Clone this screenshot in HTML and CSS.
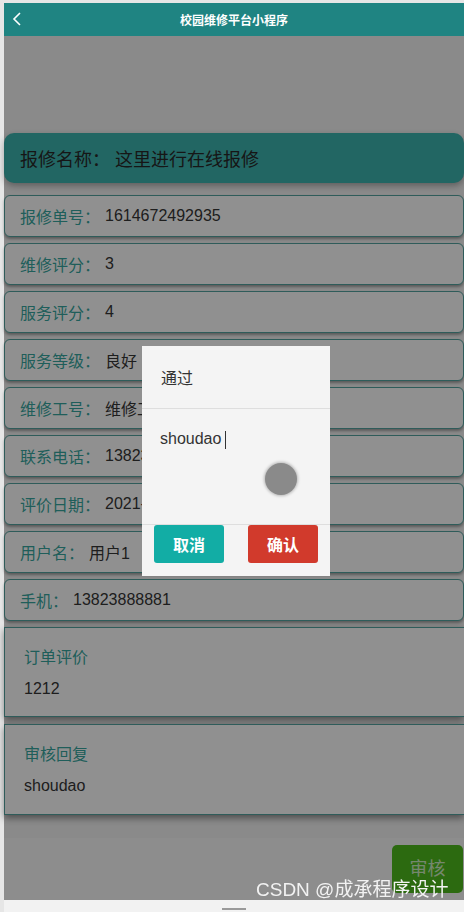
FILE: index.html
```html
<!DOCTYPE html>
<html lang="zh-CN">
<head>
  <meta charset="UTF-8">
  <title>校园维修平台小程序</title>
  <link rel="stylesheet" href="styles.css">
</head>
<body>

  <div class="nav">
    <svg class="back" width="12" height="16" viewBox="0 0 12 16">
      <polyline points="8,2 2,8 8,14" fill="none" stroke="#fff" stroke-width="1.6" />
    </svg>
    <span class="nav-title">校园维修平台小程序</span>
  </div>

  <div class="page">
    <div class="head-card"><span class="head-label">报修名称：</span>这里进行在线报修</div>

    <div class="rows">
      <div class="row"><span class="label">报修单号：</span>1614672492935</div>
      <div class="row"><span class="label">维修评分：</span>3</div>
      <div class="row"><span class="label">服务评分：</span>4</div>
      <div class="row"><span class="label">服务等级：</span>良好</div>
      <div class="row"><span class="label">维修工号：</span>维修工1</div>
      <div class="row"><span class="label">联系电话：</span>13823888881</div>
      <div class="row"><span class="label">评价日期：</span>2021-03-02</div>
      <div class="row"><span class="label">用户名：</span>用户1</div>
      <div class="row"><span class="label">手机：</span>13823888881</div>
    </div>

    <div class="block">
      <div class="block-title">订单评价</div>
      <div class="block-text">1212</div>
    </div>
    <div class="block second">
      <div class="block-title">审核回复</div>
      <div class="block-text">shoudao</div>
    </div>

    <div class="footer">
      <button class="audit">审核</button>
    </div>
  </div>

  <div class="mask">
    <div class="dialog">
      <div class="dialog-title">通过</div>
      <div class="dialog-body">
        <span class="input-text">shoudao</span><span class="caret"></span>
        <div class="touch"></div>
      </div>
      <div class="dialog-btns">
        <button class="btn cancel">取消</button>
        <button class="btn ok">确认</button>
      </div>
    </div>
  </div>

  <div class="watermark">CSDN @成承程序设计</div>
  <div class="home-bar"><span class="handle"></span></div>

</body>
</html>
```

FILE: styles.css
```css
body {
  margin: 0;
  padding: 3px 0 0 4px;
  background-color: #e6e6e6;
  font-family: 'Liberation Sans', 'Noto Sans CJK SC', sans-serif;
  color: #333;
  height: 909px;
  overflow: hidden;
}

.nav {
  height: 33px;
  background-color: #1f8482;
  display: flex;
  align-items: center;
  justify-content: center;
  position: relative;
}

.back {
  position: absolute;
  left: 8px;
  top: 8px;
}

.nav-title {
  color: #fff;
  font-size: 12px;
  font-weight: bold;
}

.page {
  padding-top: 97px;
}

.head-card {
  height: 50px;
  background-color: #3aaaa5;
  border-radius: 10px;
  box-shadow: 0 3px 6px rgba(0,0,0,0.3);
  display: flex;
  align-items: center;
  padding-left: 16px;
  font-size: 18px;
  color: #262626;
}

.head-label {
  margin-right: 5px;
}

.rows {
  margin-top: 12px;
  display: flex;
  flex-direction: column;
  gap: 6px;
}

.row {
  height: 40px;
  border: 1px solid #4f9a96;
  border-radius: 6px;
  background-color: #f1f1f1;
  box-shadow: 0 2px 3px rgba(0,0,0,0.35);
  display: flex;
  align-items: center;
  padding-left: 15px;
  font-size: 16px;
  color: #333;
}

.label {
  color: #349d96;
  margin-right: 5px;
}

.block {
  margin-top: 6px;
  border: 1px solid #4f9a96;
  border-right: none;
  background-color: #f1f1f1;
  box-shadow: 0 3px 7px rgba(0,0,0,0.45);
  padding-left: 19px;
  box-sizing: border-box;
  height: 90px;
  padding-top: 19px;
}

.block.second {
  margin-top: 7px;
  height: 91px;
}

.block-title {
  font-size: 16px;
  color: #349d96;
  line-height: 22px;
}

.block-text {
  margin-top: 9px;
  font-size: 16px;
  color: #333;
  line-height: 22px;
}

.footer {
  margin-top: 23px;
  height: 62px;
  background-color: #ebebeb;
  display: flex;
  justify-content: flex-end;
  padding-top: 7px;
  padding-right: 1px;
}

.audit {
  width: 71px;
  height: 48px;
  border: none;
  border-radius: 5px;
  background-color: #4ab11b;
  color: #c4e2b8;
  font-size: 18px;
  font-family: 'Liberation Sans', 'Noto Sans CJK SC', sans-serif;
  padding: 0 0 4px;
}

.mask {
  position: fixed;
  left: 4px;
  right: 0;
  top: 36px;
  bottom: 12px;
  background-color: rgba(0,0,0,0.4);
}

.dialog {
  position: absolute;
  left: 138px;
  top: 310px;
  width: 188px;
  height: 230px;
  background-color: #f4f4f4;
}

.dialog-title {
  height: 62px;
  border-bottom: 1px solid #dedede;
  display: flex;
  align-items: center;
  padding-left: 19px;
  font-size: 16px;
  color: #333;
}

.dialog-body {
  height: 116px;
  border-bottom: 1px solid #dedede;
  position: relative;
  padding: 20px 0 0 18px;
  box-sizing: border-box;
  display: flex;
  align-items: flex-start;
}

.input-text {
  font-size: 16px;
  color: #333;
  line-height: 20px;
}

.caret {
  width: 1px;
  height: 18px;
  background-color: #333;
  margin: 2px 0 0 4px;
}

.touch {
  position: absolute;
  left: 123px;
  top: 54px;
  width: 32px;
  height: 32px;
  border-radius: 50%;
  background-color: #8a8a8a;
  box-shadow: 0 0 3px 1px rgba(0,0,0,0.25);
}

.dialog-btns {
  display: flex;
  justify-content: space-between;
  padding: 0 12px;
}

.btn {
  width: 70px;
  height: 38px;
  border: none;
  border-radius: 3px;
  color: #fff;
  font-size: 16px;
  font-weight: bold;
  font-family: 'Liberation Sans', 'Noto Sans CJK SC', sans-serif;
  padding: 0;
}

.cancel {
  background-color: #12ada5;
}

.ok {
  background-color: #d13a2c;
}

.watermark {
  position: fixed;
  left: 256px;
  top: 879px;
  font-size: 19px;
  line-height: 22px;
  color: #f2f2f2;
}

.home-bar {
  position: fixed;
  left: 4px;
  right: 0;
  bottom: 0;
  height: 12px;
  background-color: #f2f2f2;
  display: flex;
  justify-content: center;
  align-items: flex-end;
}

.handle {
  width: 24px;
  height: 2px;
  background-color: #9a9a9a;
  margin-bottom: 2px;
}
```
